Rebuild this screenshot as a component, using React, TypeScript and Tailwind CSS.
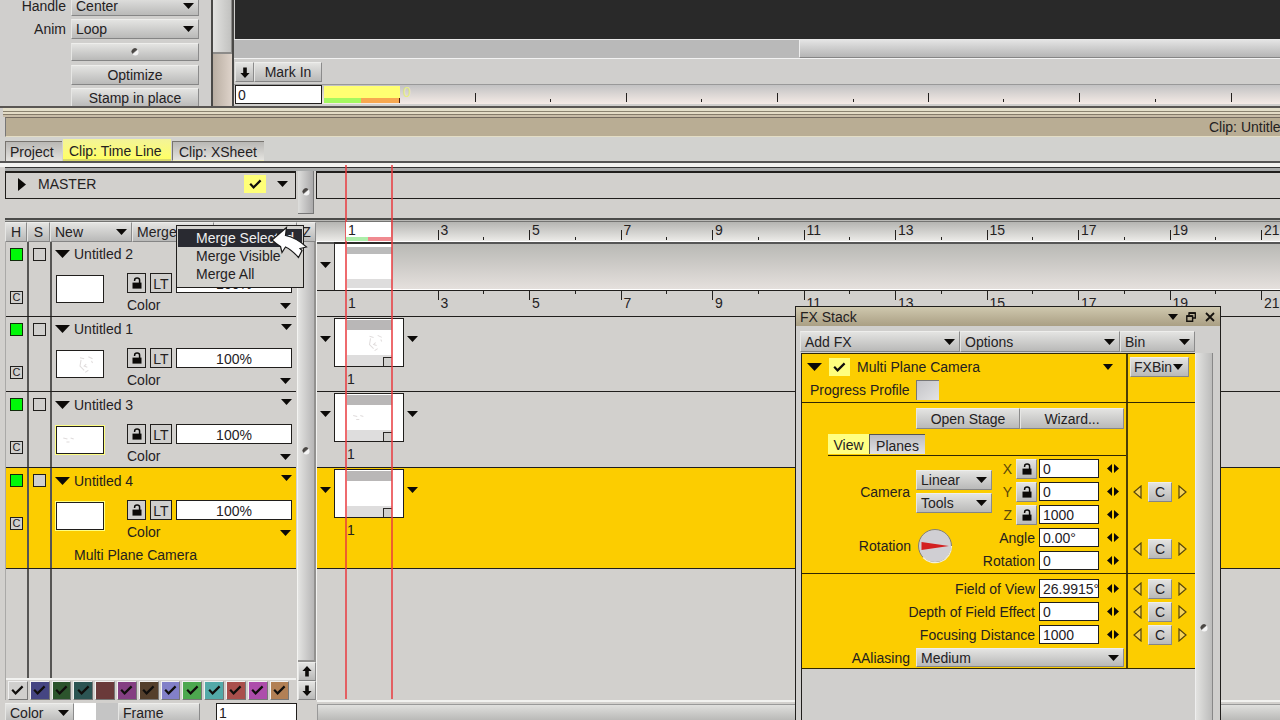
import React from "react";

const BTN = "bg-linear-to-b from-[#e4e4e2] to-[#b9b9b8] border-t border-l border-t-[#eeeeec] border-l-[#e6e6e4] border-r border-b border-r-[#8b8b8b] border-b-[#858585]";
const FIELD = "bg-white border border-[#201e1c]";

function Down({ size = "h-[6px] w-[11px]", className = "" }: { size?: string; className?: string }) {
  return (
    <svg viewBox="0 0 12 6" preserveAspectRatio="none" className={`block shrink-0 fill-[#0c0a08] ${size} ${className}`}>
      <path d="M0 0H12L6 6Z" />
    </svg>
  );
}

function Check() {
  return (
    <svg viewBox="0 0 13 11" className="h-[11px] w-[13px]">
      <path d="M1.2 4.8L4.6 8.4L11.6 1.4" fill="none" stroke="#100e0c" strokeWidth="2.2" />
    </svg>
  );
}

function Lock() {
  return (
    <svg viewBox="0 0 10 12" className="h-[12px] w-[10px]">
      <path d="M2.6 4V3.2C2.6 0.4 7.6 0.4 7.6 3.2V6" fill="none" stroke="#0c0a08" strokeWidth="1.5" />
      <rect x="0.5" y="5.6" width="9" height="6" fill="#0c0a08" />
    </svg>
  );
}

function Dot() {
  return (
    <svg viewBox="0 0 8 8" className="h-[8px] w-[8px]">
      <circle cx="4.3" cy="4.3" r="3.2" fill="#f4f4f4" />
      <path d="M6.2 1.6A3 3 0 0 0 1.6 5.6Z" fill="#4a4744" stroke="#4a4744" strokeWidth="0.6" />
    </svg>
  );
}

function Arrow({ down = false }: { down?: boolean }) {
  return (
    <svg viewBox="0 0 10 11" className={`h-[11px] w-[10px] fill-[#0c0a08] ${down ? "rotate-180" : ""}`}>
      <path d="M5 0L9.6 5H6.8V10.5H3.2V5H0.4Z" />
    </svg>
  );
}

function Drop({ label, className = "" }: { label: string; className?: string }) {
  return (
    <div className={`flex items-center justify-between pl-[4px] pr-[4px] ${BTN} ${className}`}>
      <span>{label}</span>
      <Down />
    </div>
  );
}

function Ruler({ below = false }: { below?: boolean }) {
  const marks = ["", "3", "5", "7", "9", "11", "13", "15", "17", "19", "21"];
  return (
    <div className={`flex h-full w-[934px] overflow-hidden ${below ? "items-start" : "items-end"}`}>
      {marks.map((m, i) => (
        <div key={i} className={`flex h-full w-[91.5px] shrink-0 ${below ? "items-start" : "items-end"}`}>
          <div className={`flex h-full w-[45.5px] ${below ? "items-start" : "items-end"}`}>
            {m && <div className={`w-px bg-[#22201e] ${below ? "h-[9px]" : "mb-px h-[10px]"}`} />}
            <div className={`ml-[2px] h-[14px] leading-[14px] ${below ? "mt-[5px]" : "mb-[4px]"}`}>{m}</div>
          </div>
          {m && <div className={`h-[3px] w-px bg-[#22201e] ${below ? "" : "mb-px"}`} />}
        </div>
      ))}
    </div>
  );
}

function TopPanel() {
  return (
    <div className="flex h-[106px] shrink-0 overflow-hidden bg-[#d0cfcd]">
      <div className="flex h-full w-[211px] shrink-0 flex-col items-end pr-[12px]">
        <div className="-mt-[4px] flex h-[20px] shrink-0 items-center gap-[5px]">
          <span>Handle</span>
          <Drop label="Center" className="h-[20px] w-[128px]" />
        </div>
        <div className="mt-[3px] flex h-[20px] shrink-0 items-center gap-[5px]">
          <span>Anim</span>
          <Drop label="Loop" className="h-[20px] w-[128px]" />
        </div>
        <div className={`mt-[4px] flex h-[18px] w-[128px] shrink-0 items-center justify-center ${BTN}`}><Dot /></div>
        <div className={`mt-1 flex h-[20px] w-[128px] shrink-0 items-center justify-center ${BTN}`}>Optimize</div>
        <div className={`mt-[3px] flex h-[20px] w-[128px] shrink-0 items-center justify-center ${BTN}`}>Stamp in place</div>
      </div>
      <div className="w-[2px] bg-[#4a4947]" />
      <div className="w-[19px] bg-linear-to-r from-[#b9aea2] to-[#ded3ca]">
        <div className="h-[54px] border-b-2 border-r border-[#8c8b89] bg-linear-to-r from-[#e2e2e0] to-[#c2c2c0]" />
      </div>
      <div className="w-[2px] bg-[#4a4947]" />
      <div className="flex flex-1 flex-col">
        <div className="ml-px h-[39px] bg-[#292929]" />
        <div className="flex h-[20px] border-y border-t-[#e8e8e8] border-b-[#f2f2f2] bg-[#b9b9b9]">
          <div className="w-[565px]" />
          <div className="flex-1 border-b border-l border-[#858585] border-l-[#eee] bg-linear-to-b from-[#e4e4e4] to-[#b5b5b5]" />
        </div>
        <div className="flex h-[25px] items-start pl-px pt-[3px]">
          <div className={`flex h-[20px] w-[19px] items-center justify-center ${BTN}`}><Arrow down /></div>
          <div className={`flex h-[20px] w-[68px] items-center justify-center ${BTN}`}>Mark In</div>
        </div>
        <div className="flex h-[20px] border-t border-[#999] bg-linear-to-b from-[#c2c2c3] to-[#f5ebe6]">
          <div className={`ml-px flex h-[19px] w-[87px] items-center pl-[2px] ${FIELD}`}>0</div>
          <div className="ml-[2px] flex h-[18px] w-[76px] flex-col pt-px">
            <div className="h-[12px] bg-[#ffff72]" />
            <div className="flex h-[5px]">
              <div className="w-[37px] bg-[#a4f860]" />
              <div className="flex-1 border-r border-[#502010] bg-[#f7a850]" />
            </div>
          </div>
          <span className="ml-[3px] w-[8px] leading-[15px] text-[#e6ed83]">0</span>
          <svg className="h-[19px] flex-1" viewBox="411 85 869 19" preserveAspectRatio="none">
            {[475, 626, 777, 928, 1079, 1231].map((x) => <rect key={x} x={x} y="93" width="1" height="9" fill="#22201e" />)}
            {[550, 701, 853, 1003, 1155].map((x) => <rect key={x} x={x} y="99" width="1" height="3" fill="#22201e" />)}
          </svg>
        </div>
      </div>
    </div>
  );
}

function TitleAndTabs() {
  return (
    <div className="shrink-0">
      <div className="h-[2px] bg-[#595653]" />
      <div className="ml-[3px] h-[3px] bg-[#e4dfca]" />
      <div className="ml-[3px] h-[3px] border-t border-[#8a8270] bg-[#e4dcc6]" />
      <div className="ml-[3px] h-[3px] border-t border-[#857b6a] bg-[#c9bda8]" />
      <div className="ml-[5px] flex h-[20px] items-center justify-end overflow-hidden border-b border-l border-t border-b-[#e3ddc5] border-l-[#777] border-t-[#756b60] bg-[#b9ad94]">
        <span className="w-[71px] whitespace-nowrap">Clip: Untitled</span>
      </div>
      <div className="flex h-[24px] items-end bg-[#d2d2cf] pl-[5px]">
        <div className="mr-px flex h-[20px] w-[57px] items-center border-l border-t border-[#77746f] bg-linear-to-b from-[#b9b8b5] to-[#e4e3df] pl-[4px]">Project</div>
        <div className="mr-[1px] flex h-[22px] w-[108px] items-center border-b-2 border-[#d8d86a] bg-linear-to-b from-[#f3f398] to-[#ffff63] pl-[6px] pt-[3px]">Clip: Time Line</div>
        <div className="flex h-[20px] w-[92px] items-center border-b border-l border-t border-[#77746f] border-b-[#eeeec0] bg-linear-to-b from-[#b9b8b5] to-[#e4e3df] pl-[6px] pt-px">Clip: XSheet</div>
      </div>
      <div className="h-[2px] bg-[#555]" />
      <div className="h-[4px] bg-[#f3f3f1]" />
      <div className="ml-[5px] h-[4px] border-t border-[#333] bg-[#a9abab]" />
    </div>
  );
}

function MasterRow() {
  return (
    <div className="flex h-[47px] shrink-0 pl-[5px]">
      <div className="flex h-[28px] w-[291px] items-center border border-t-2 border-[#201e1c] pb-[3px] pl-[12px] pr-[7px]">
        <svg viewBox="0 0 8 13" className="h-[13px] w-[8px] fill-[#0c0a08]"><path d="M0 0L8 6.5L0 13Z" /></svg>
        <span className="ml-[12px] flex-1">MASTER</span>
        <div className="flex h-[18px] w-[22px] items-center justify-center bg-[#ffff78]"><Check /></div>
        <Down className="ml-[11px]" />
      </div>
      <div className="ml-[2px] flex h-[43px] w-[16px] items-center justify-center border-b border-r border-[#777] bg-linear-to-r from-[#dededc] to-[#aaa9aa]"><Dot /></div>
      <div className="ml-[2px] h-[28px] flex-1 border border-r-0 border-t-2 border-[#201e1c]" />
    </div>
  );
}

function TimelineHeader() {
  return (
    <div className="shrink-0">
      <div className="ml-[5px] h-[4px] border-y border-t-2 border-t-[#4b4b49] border-b-[#747472] bg-[#b9b9b6]" />
      <div className="flex h-[20px] pl-[5px]">
        <div className={`flex w-[22px] items-center justify-center ${BTN}`}>H</div>
        <div className={`flex w-[23px] items-center justify-center ${BTN}`}>S</div>
        <Drop label="New" className="w-[82px]" />
        <Drop label="Merge" className="w-[82px]" />
        <Drop label="" className="w-[83px]" />
        <div className={`flex w-[19px] items-center justify-center ${BTN}`}>Z</div>
        <div className="flex flex-1 overflow-hidden border-b border-white bg-linear-to-b from-[#b5b5b2] to-[#ecebe8]">
          <div className="w-[30px] shrink-0" />
          <div className="z-10 flex h-[20px] w-[45px] shrink-0 flex-col bg-white">
            <span className="h-[15px] pl-[2px] leading-[17px]">1</span>
            <div className="flex h-[4px]"><div className="w-[22px] bg-[#aceeaa]" /><div className="flex-1 bg-[#f08a90]" /></div>
          </div>
          <div className="-ml-[45px] flex h-full">
            <Ruler />
          </div>
        </div>
      </div>
    </div>
  );
}

type Layer = { name: string; height: string; active?: boolean; outline?: boolean; sketch?: number; covered?: boolean };
const LAYERS: Layer[] = [
  { name: "Untitled 2", height: "h-[75px]", covered: true },
  { name: "Untitled 1", height: "h-[75px]", sketch: 1 },
  { name: "Untitled 3", height: "h-[76px]", outline: true, sketch: 2 },
  { name: "Untitled 4", height: "h-[101px]", active: true, outline: true },
];

function Sketch({ kind }: { kind?: number }) {
  if (!kind) return null;
  return (
    <svg viewBox="0 0 44 24" className="h-full w-full" fill="none" stroke="#e0dcdc" strokeWidth="1">
      {kind === 1
        ? <path d="M22 6l4 1M30 5l4 2M33 9l1 2M28 12l-2 2l3 1M23 8l-1 6l4 4M30 18l-3 2" />
        : <path d="M6 10l4 1M13 10l3 1M9 14l3 0" />}
    </svg>
  );
}

function LayerRow({ layer }: { layer: Layer }) {
  return (
    <div className={`flex shrink-0 border-b border-[#201e1c] ${layer.height} ${layer.active ? "bg-[#fccd00]" : ""}`}>
      <div className="flex w-[21px] flex-col items-center pt-[6px]">
        <div className="h-[13px] w-[13px] border border-[#102a0a] bg-[#00f808]" />
        <div className="mt-[30px] flex h-[13px] w-[13px] items-center justify-center border border-[#201e1c] bg-[#d0cfcd] text-[11px] leading-[11px]">C</div>
      </div>
      <div className="flex w-[25px] justify-center border-x-2 border-[#565553] pt-[6px]">
        <div className="h-[13px] w-[13px] border border-[#201e1c] bg-[#d0cfcd]" />
      </div>
      <div className="flex flex-1 flex-col">
        <div className="flex h-[25px] items-center pl-[3px] pr-[4px]">
          <Down size="h-[8px] w-[15px]" />
          <span className="ml-[4px] flex-1">{layer.name}</span>
          {!layer.covered && <Down className="mb-[5px]" />}
        </div>
        <div className="mt-[7px] flex h-[43px] pl-[3px]">
          <div className={`mt-px h-[30px] w-[50px] border ${layer.outline ? "border-[#ffff82]" : "border-transparent"}`}>
            <div className="h-[28px] w-[48px] border border-[#201e1c] bg-white"><Sketch kind={layer.sketch} /></div>
          </div>
          <div className="ml-[22px] flex flex-1 flex-col">
            <div className="flex h-[20px] gap-[4px]">
              <div className="flex w-[19px] items-center justify-center border border-[#201e1c] bg-[#d0cfcd]"><Lock /></div>
              <div className="flex w-[22px] items-center justify-center border border-[#201e1c] bg-[#d0cfcd] pt-px">LT</div>
              <div className="flex w-[116px] items-center justify-center border border-[#201e1c] bg-white pt-px">100%</div>
            </div>
            <div className="flex h-[23px] items-center justify-between pt-px pr-[5px]">
              <span>Color</span>
              <Down className="mt-[2px]" />
            </div>
          </div>
        </div>
        {layer.active && <div className="flex h-[24px] items-center pl-[22px]">Multi Plane Camera</div>}
      </div>
    </div>
  );
}

function Clip({ sketch }: { sketch?: number }) {
  return (
    <div className="mt-px flex h-[49px] w-[70px] border border-[#201e1c] bg-white">
      <div className="ml-[12px] flex w-[45px] flex-col">
        <div className="mt-px h-[10px] bg-[#b9b7b7]" />
        <div className="h-[25px] bg-white">{sketch && <Sketch kind={sketch} />}</div>
        <div className="flex h-[11px] items-end justify-end bg-[#dedddd]">
          <div className="h-[9px] w-[9px] border-l border-t border-[#2a2826] bg-[#d0cfcd]" />
        </div>
      </div>
    </div>
  );
}

function Tracks() {
  return (
    <div className="flex flex-1 flex-col border-l border-[#f2f2f0]">
      <div className="flex h-[75px] flex-col border-b border-[#201e1c]">
        <div className="flex h-[49px] border-b border-[#201e1c]">
          <div className="flex w-[17px] items-center justify-center border-t-2 border-[#555] pb-[5px]"><Down /></div>
          <div className="flex w-[58px] flex-col border-l border-t-2 border-[#2c2a28] bg-white pl-[12px]">
            <div className="mt-[3px] h-[7px] bg-[#bbb]" />
            <div className="h-[25px]" />
            <div className="h-[9px] bg-[#dedddd]" />
          </div>
          <div className="flex-1 border-b border-t-2 border-b-white border-t-[#555] bg-linear-to-b from-[#b9b9b5] to-[#e5e0dd]" />
        </div>
        <div className="flex h-[25px] pl-[29px]">
          <span className="w-0 pl-[2px] pt-[3px] leading-[19px]">1</span>
          <div className="-ml-[2px] flex h-full"><Ruler below /></div>
        </div>
      </div>
      {LAYERS.slice(1).map((l) => (
        <div key={l.name} className={`flex shrink-0 border-b border-[#201e1c] ${l.height} ${l.active ? "bg-[#fccd00]" : ""}`}>
          <div className="flex h-[49px] w-[17px] items-center justify-center pb-[5px]"><Down /></div>
          <div>
            <Clip sketch={l.sketch} />
            <div className="pl-[13px] leading-[24px]">1</div>
          </div>
          <div className="flex h-[49px] w-[17px] items-center justify-center pb-[5px]"><Down /></div>
        </div>
      ))}
    </div>
  );
}

const SWATCHES = ["bg-[#d0cfcd]", "bg-[#454582]", "bg-[#2c542c]", "bg-[#2c5453]", "bg-[#6a3a3a]", "bg-[#843f82]", "bg-[#543f2c]", "bg-[#8280c8]", "bg-[#4da84f]", "bg-[#53a9a8]", "bg-[#a94f4c]", "bg-[#ad4dab]", "bg-[#b28055]"];

function LayerPanel() {
  return (
    <div className="ml-[5px] flex w-[291px] shrink-0 flex-col border-l border-[#aaa9a7]">
      {LAYERS.map((l) => <LayerRow key={l.name} layer={l} />)}
      <div className="flex flex-1">
        <div className="w-[21px]" />
        <div className="w-[25px] border-x-2 border-[#565553]" />
      </div>
      <div className="flex h-[22px] items-center gap-[2px] border-t-2 border-[#f2f2f0] pl-[2px]">
        {SWATCHES.map((c, i) => (
          <div key={c} className={`flex h-[19px] w-[19.8px] shrink-0 items-center justify-center border border-b-[#777] border-l-[#f0f0f0] border-r-[#777] border-t-[#f0f0f0] ${c}`}>
            {i !== 4 && <Check />}
          </div>
        ))}
      </div>
    </div>
  );
}

function Footer() {
  return (
    <div className="flex h-[20px] shrink-0 overflow-hidden pl-[5px]">
      <Drop label="Color" className="mt-[3px] h-[20px] w-[69px]" />
      <div className="mt-[3px] h-[20px] w-[22px] bg-white" />
      <div className="mt-[3px] h-[20px] w-[22px] bg-[#c5c5c5]" />
      <div className={`mt-[3px] flex h-[20px] w-[82px] items-center pl-[4px] ${BTN}`}>Frame</div>
      <div className={`ml-[16px] mt-[3px] flex h-[20px] w-[81px] items-center pl-[2px] ${FIELD}`}>1</div>
      <div className="ml-[20px] flex-1 border-t-2 border-[#f2f2f0] pt-[2px]">
        <div className="h-[20px] border-t border-l border-[#999] bg-linear-to-b from-[#e0e0de] to-[#b0b0ae]" />
      </div>
    </div>
  );
}

function ContextMenu() {
  return (
    <div className="absolute left-[176px] top-[225px] h-[63px] w-[128px] border border-[#201e1c] bg-[#d3d2ce] px-px pt-[3px]">
      <div className="flex h-[18px] items-center bg-[#292a31] pl-[18px] text-[#efefef]">Merge Selected</div>
      <div className="flex h-[18px] items-center pl-[18px]">Merge Visible</div>
      <div className="flex h-[18px] items-center pl-[18px]">Merge All</div>
    </div>
  );
}

function Keys({ className = "" }: { className?: string }) {
  return (
    <div className={`flex h-[23px] items-center pl-[5px] ${className}`}>
      <svg viewBox="0 0 9 14" className="h-[14px] w-[9px]" fill="#f6d35a" stroke="#54440c" strokeWidth="1.2"><path d="M8 1V13L1 7Z" /></svg>
      <div className={`mx-[6px] flex h-[20px] w-[24px] items-center justify-center pt-px ${BTN}`}>C</div>
      <svg viewBox="0 0 9 14" className="h-[14px] w-[9px]" fill="#f6d35a" stroke="#54440c" strokeWidth="1.2"><path d="M1 1V13L8 7Z" /></svg>
    </div>
  );
}

function NumberRow({ label, value, lock = false }: { label: string; value: string; lock?: boolean }) {
  return (
    <div className="flex h-[23px] items-center justify-end">
      <span className={`whitespace-nowrap ${lock ? "mr-[4px] text-[#5b490a]" : "mr-[4px]"}`}>{label}</span>
      {lock && <div className={`mr-[2px] flex h-[20px] w-[21px] shrink-0 items-center justify-center ${BTN}`}><Lock /></div>}
      <div className={`flex h-[19px] w-[60px] shrink-0 items-center overflow-hidden pl-[3px] ${FIELD}`}>{value}</div>
      <svg viewBox="0 0 12 9" className="ml-[8px] mr-[7px] h-[9px] w-[12px] shrink-0 fill-[#0c0a08]"><path d="M5 0V9L0 4.5ZM7 0V9L12 4.5Z" /></svg>
    </div>
  );
}

function FxPanel() {
  return (
    <div className="absolute left-[795px] top-[306px] flex h-[414px] w-[426px] flex-col overflow-hidden border-x border-t border-[#201e1c] bg-[#d0cfcd]">
      <div className="flex h-[19px] shrink-0 items-center bg-linear-to-b from-[#cfc8ae] to-[#aa9f84] pl-[4px] pr-[5px]">
        <span className="flex-1">FX Stack</span>
        <Down size="h-[6px] w-[10px]" />
        <svg viewBox="0 0 10 10" className="ml-[8px] h-[10px] w-[10px]" fill="none" stroke="#15120e" strokeWidth="1.4">
          <path d="M3 3V1H9.3V6H7M0.8 4H6.6V9.2H0.8Z" /><path d="M3 1.2H9.3M0.8 4.2H6.6" strokeWidth="1.8" />
        </svg>
        <svg viewBox="0 0 10 10" className="ml-[9px] h-[10px] w-[10px]" stroke="#15120e" strokeWidth="1.8"><path d="M1 1L9 9M9 1L1 9" /></svg>
      </div>
      <div className="mb-px mt-[5px] flex h-[21px] shrink-0 pl-[4px]">
        <Drop label="Add FX" className="w-[160px]" />
        <Drop label="Options" className="w-[160px]" />
        <Drop label="Bin" className="w-[75px]" />
      </div>
      <div className="flex flex-1">
        <div className="ml-[5px] flex w-[394px] shrink-0 flex-col border-l border-[#201e1c]">
          <div className="flex h-[50px] border-y border-[#302703] bg-[#fccd00]">
            <div className="w-[326px] shrink-0 border-r-2 border-[#4b3e06]">
              <div className="flex h-[26px] items-center pl-[5px] pr-[13px]">
                <Down size="h-[8px] w-[15px]" />
                <div className="mx-[7px] flex h-[18px] w-[21px] items-center justify-center bg-[#ffff7e]"><Check /></div>
                <span className="flex-1">Multi Plane Camera</span>
                <Down size="h-[6px] w-[10px]" />
              </div>
              <div className="flex h-[20px] items-center pl-[8px]">
                Progress Profile
                <div className="ml-[6px] h-[20px] w-[23px] border-l border-t border-[#777] bg-linear-to-br from-[#c4c4c8] to-[#e3e3e4]" />
              </div>
            </div>
            <div className="pl-[2px] pt-[3px]">
              <div className={`flex h-[20px] w-[59px] items-center gap-px pl-[3px] ${BTN}`}>FXBin<Down size="h-[6px] w-[10px]" /></div>
            </div>
          </div>
          <div className="flex h-[171px] border-b border-[#302703] bg-[#fccd00]">
            <div className="flex w-[326px] shrink-0 flex-col border-r-2 border-[#4b3e06]">
              <div className="mt-[5px] flex h-[21px] pl-[114px]">
                <div className={`flex w-[104px] items-center justify-center ${BTN}`}>Open Stage</div>
                <div className={`flex w-[104px] items-center justify-center ${BTN}`}>Wizard...</div>
              </div>
              <div className="ml-[26px] mt-[5px] flex h-[22px] border-b border-[#302703]">
                <div className="flex h-[20px] w-[41px] items-center justify-center bg-[#ffff82] pt-px">View</div>
                <div className="flex h-[20px] w-[56px] items-center justify-center border-l border-t border-[#555] bg-linear-to-b from-[#bcbcc2] to-[#e2e2e4] pt-[2px]">Planes</div>
              </div>
              <div className="flex flex-1 pt-px">
                <div className="flex w-[190px] shrink-0 flex-col items-end">
                  <div className="mt-[13px] flex h-[43px] items-center gap-[6px]">
                    <span>Camera</span>
                    <div className="flex w-[76px] flex-col gap-[3px]">
                      <Drop label="Linear" className="h-[20px]" />
                      <Drop label="Tools" className="h-[20px]" />
                    </div>
                  </div>
                  <div className="mt-[15px] flex items-center gap-[6px] pr-[39px]">
                    <span>Rotation</span>
                    <svg viewBox="0 0 36 36" className="h-[36px] w-[36px]">
                      <circle cx="18" cy="18" r="16.5" fill="#d0cfd3" stroke="#858070" strokeWidth="1" />
                      <path d="M6 29.5A16.5 16.5 0 0 0 34.5 18" fill="none" stroke="#f4f0d8" strokeWidth="1.2" />
                      <path d="M4.5 14L32 18L4.5 22Z" fill="#d32020" />
                    </svg>
                  </div>
                </div>
                <div className="min-w-0 flex-1">
                  <NumberRow label="X" value="0" lock />
                  <NumberRow label="Y" value="0" lock />
                  <NumberRow label="Z" value="1000" lock />
                  <NumberRow label="Angle" value="0.00°" />
                  <NumberRow label="Rotation" value="0" />
                </div>
              </div>
            </div>
            <div className="pt-[77px]"><Keys /><Keys className="mt-[34px]" /></div>
          </div>
          <div className="flex h-[95px] border-b border-[#302703] bg-[#fccd00]">
            <div className="w-[326px] shrink-0 border-r-2 border-[#4b3e06] pt-[3px]">
              <NumberRow label="Field of View" value="26.9915°" />
              <NumberRow label="Depth of Field Effect" value="0" />
              <NumberRow label="Focusing Distance" value="1000" />
              <div className="flex h-[22px] items-center justify-end gap-[6px] pr-[2px] pt-px">
                <span>AAliasing</span>
                <Drop label="Medium" className="h-[19px] w-[208px]" />
              </div>
            </div>
            <div className="pt-[3px]"><Keys /><Keys /><Keys /></div>
          </div>
        </div>
        <div className="flex w-[18px] justify-center border-l border-r border-l-[#eee] border-r-[#888] bg-linear-to-r from-[#e3e3e1] to-[#bcbcbb] pt-[271px]"><Dot /></div>
      </div>
    </div>
  );
}

export default function App() {
  return (
    <div className="relative flex h-[720px] w-[1280px] flex-col overflow-hidden bg-[#d2d0cd] font-['Liberation_Sans',Arial,sans-serif] text-[14px] leading-[18px] text-[#24211f]">
      <TopPanel />
      <TitleAndTabs />
      <MasterRow />
      <TimelineHeader />
      <div className="flex min-h-0 flex-1">
        <LayerPanel />
        <div className="ml-px flex w-[19px] shrink-0 flex-col border-l border-[#f4f4f2]">
          <div className="flex flex-1 justify-center border-b-2 border-r-2 border-[#92918f] bg-linear-to-r from-[#e4e4e2] to-[#b7b6b6] pt-[205px]"><Dot /></div>
          <div className={`flex h-[19px] items-center justify-center ${BTN}`}><Arrow /></div>
          <div className={`flex h-[19px] items-center justify-center ${BTN}`}><Arrow down /></div>
        </div>
        <Tracks />
      </div>
      <Footer />
      <div className="absolute left-[345px] top-[165px] flex h-[534px] w-[48px] justify-between">
        <div className="w-[2px] bg-[#e83a3e]/75" />
        <div className="w-[2px] bg-[#e83a3e]/75" />
      </div>
      <ContextMenu />
      <svg viewBox="270 224 38 36" className="absolute left-[270px] top-[224px] h-[36px] w-[38px]">
        <path d="M272 240L286.5 227.5L285.5 235.5C293 237 300 241 306.5 247L300 248.5L302 250.5L298.5 257.5C294 252.5 290 249 285.5 247L282 252.5L280.5 246.5C278 245 275 243 272 240Z" fill="#fff" stroke="#1a1a1a" strokeWidth="1.2" />
      </svg>
      <FxPanel />
    </div>
  );
}
